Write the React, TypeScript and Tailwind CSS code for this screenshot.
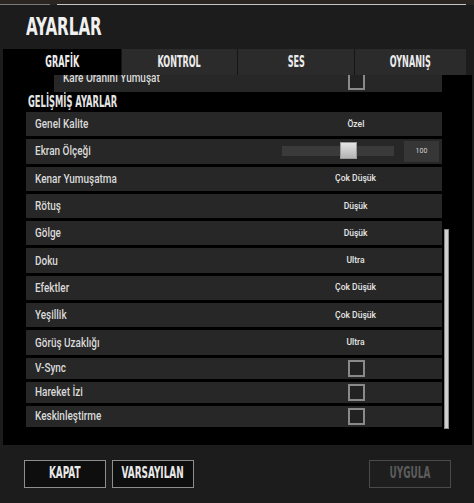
import React from 'react'

const head = "font-['DejaVu_Sans_Condensed','DejaVu_Sans',sans-serif] font-bold"
const body = "font-['Roboto',sans-serif]"

type Row =
  | { label: string; kind: 'value'; value: string }
  | { label: string; kind: 'slider'; value: number }
  | { label: string; kind: 'check' }

const rows: Row[] = [
  { label: 'Genel Kalite', kind: 'value', value: 'Özel' },
  { label: 'Ekran Ölçeği', kind: 'slider', value: 100 },
  { label: 'Kenar Yumuşatma', kind: 'value', value: 'Çok Düşük' },
  { label: 'Rötuş', kind: 'value', value: 'Düşük' },
  { label: 'Gölge', kind: 'value', value: 'Düşük' },
  { label: 'Doku', kind: 'value', value: 'Ultra' },
  { label: 'Efektler', kind: 'value', value: 'Çok Düşük' },
  { label: 'Yeşillik', kind: 'value', value: 'Çok Düşük' },
  { label: 'Görüş Uzaklığı', kind: 'value', value: 'Ultra' },
  { label: 'V-Sync', kind: 'check' },
  { label: 'Hareket İzi', kind: 'check' },
  { label: 'Keskinleştirme', kind: 'check' },
]

const tabs = [
  { name: 'GRAFİK', w: 'w-[118px]', active: true },
  { name: 'KONTROL', w: 'w-[116px]', active: false },
  { name: 'SES', w: 'w-[117px]', active: false },
  { name: 'OYNANIŞ', w: 'w-[112px]', active: false },
]

function Checkbox() {
  return <div className="w-[17px] h-[17px] border-2 border-[#8a8a8a] bg-[#222222]" />
}

function Label({ text, raised }: { text: string; raised?: boolean }) {
  return (
    <div className={`flex-1 pl-[9px] flex items-center ${raised ? 'mb-[7px]' : ''}`}>
      <span
        className={`inline-block origin-left scale-x-[0.83] whitespace-nowrap text-[12px] leading-none font-medium text-[#dadada] ${body}`}
      >
        {text}
      </span>
    </div>
  )
}

function SettingRow({ row }: { row: Row }) {
  const tall = row.kind !== 'check'
  return (
    <div
      className={`flex items-center w-[416px] bg-[#272727] ${tall ? 'h-[24.3px]' : 'h-[21px]'}`}
    >
      <Label text={row.label} />
      {row.kind === 'value' && (
        <div className={`w-[120px] mr-[26px] text-center text-[9px] leading-none font-medium text-[#e6e6e6] ${body}`}>
          <span className="inline-block scale-x-[0.95]">{row.value}</span>
        </div>
      )}
      {row.kind === 'check' && (
        <div className="w-[120px] mr-[26px] flex justify-center">
          <Checkbox />
        </div>
      )}
      {row.kind === 'slider' && (
        <div className="flex items-center mr-[3px]">
          <div className="relative w-[112px] h-[10px] bg-[#3a3a3a]">
            <div className="absolute left-[58px] top-[-4px] w-[17px] h-[17px] bg-gradient-to-b from-[#e4e4e4] to-[#b4b4b4] border border-[#9a9a9a]" />
          </div>
          <div
            className={`ml-[10px] w-[35px] h-[21px] bg-[#363636] flex items-center justify-center text-[7px] text-[#d0d0d0] ${body}`}
          >
            {row.value}
          </div>
        </div>
      )}
    </div>
  )
}

function FooterButton({ label, disabled }: { label: string; disabled?: boolean }) {
  return (
    <button
      type="button"
      className={`w-[82px] h-[28px] flex items-center justify-center border-[1.5px] ${
        disabled ? 'border-[#4a4a4a] bg-[#1e1e1e] text-[#5c5c5c]' : 'border-[#8e8e8e] bg-[#0e0e0e] text-[#e8e8e8]'
      }`}
    >
      <span className={`inline-block scale-x-[0.64] text-[15.5px] leading-none whitespace-nowrap ${head}`}>
        {label}
      </span>
    </button>
  )
}

export default function App() {
  return (
    <div className="w-[474px] h-[503px] bg-[#1c1c1c] flex flex-col overflow-hidden">
      {/* top edge */}
      <div className="h-[5px] bg-[#2a2520] flex items-end">
        <div className="h-[1px] w-[50px] bg-[#7a7a7a]" />
        <div className="h-[1.5px] ml-[7px] mr-[8px] flex-1 bg-[#c4c4c4]" />
      </div>

      {/* title */}
      <div className="h-[44px] pl-[26px] flex items-center">
        <span className={`inline-block origin-left scale-x-[0.7] text-[24px] leading-none text-[#f0f0f0] ${head}`}>
          AYARLAR
        </span>
      </div>

      {/* tabs */}
      <div className="h-[26px] ml-[3px] mr-[8px] flex">
        {tabs.map((t) => (
          <div
            key={t.name}
            className={`${t.w} flex items-center justify-center ${
              t.active ? 'bg-black' : 'bg-[#2b2b2b] border-l border-[#151515]'
            }`}
          >
            <span className={`inline-block scale-x-[0.6] text-[15px] leading-none text-[#ececec] ${head}`}>
              {t.name}
            </span>
          </div>
        ))}
      </div>

      {/* content */}
      <div className="relative h-[370px] ml-[3px] mr-[2px] bg-black overflow-hidden">
        <div className="flex flex-col mt-[-4px]">
          <div className="ml-[51px] w-[388px] h-[21px] bg-[#272727] flex items-center">
            <Label text="Kare Oranını Yumuşat" raised />
            <div className="w-[120px] mr-[26px] flex justify-center">
              <Checkbox />
            </div>
          </div>
          <div className="h-[20px] pl-[25px] flex items-center">
            <span className={`inline-block origin-left scale-x-[0.58] text-[16px] leading-none text-[#e4e4e4] ${head}`}>
              GELİŞMİŞ AYARLAR
            </span>
          </div>
          <div className="ml-[23px] flex flex-col gap-[3px]">
            {rows.map((r) => (
              <SettingRow key={r.label} row={r} />
            ))}
          </div>
        </div>
        {/* scrollbar */}
        <div className="absolute left-[441px] top-[154px] w-[5px] h-[200px] bg-[#cfcfcf] border border-[#8a8a8a]" />
      </div>

      {/* footer */}
      <div className="flex-1 flex items-center pl-[24px] pr-[23px] gap-[6px]">
        <FooterButton label="KAPAT" />
        <FooterButton label="VARSAYILAN" />
        <div className="flex-1" />
        <FooterButton label="UYGULA" disabled />
      </div>
    </div>
  )
}
